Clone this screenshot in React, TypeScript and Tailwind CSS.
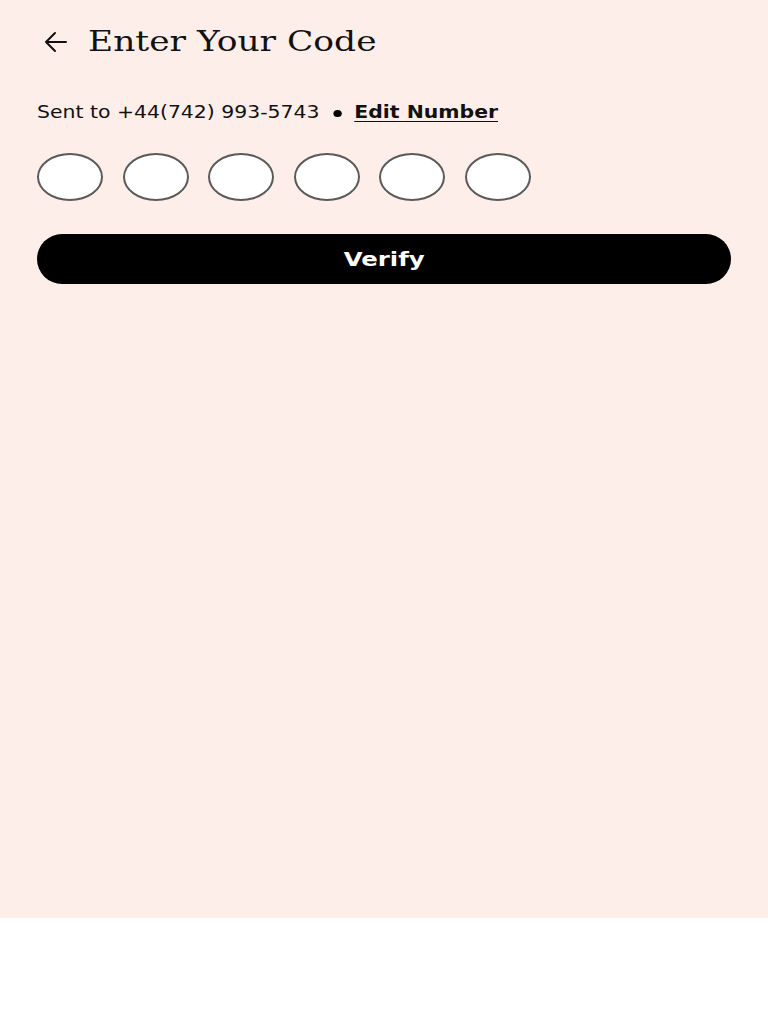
import React from "react";

export default function App() {
  return (
    <div className="w-[768px] h-[1024px] bg-white overflow-hidden">
      <div className="h-[918px] bg-[#feeee9] px-[37px] pt-[23px]" style={{ fontFamily: '"DejaVu Sans", sans-serif' }}>
        <div className="flex items-center h-[38px]">
          <svg width="26" height="22" viewBox="0 0 26 22" className="ml-[6px]" fill="none" stroke="#111" strokeWidth="2" strokeLinecap="round" strokeLinejoin="round">
            <path d="M23 11H3M12 2L3 11l9 9" />
          </svg>
          <h1 className="ml-[19px] text-[28px] text-[#111] leading-none inline-block origin-left scale-x-[1.23] whitespace-nowrap" style={{ fontFamily: '"DejaVu Serif", serif' }}>Enter Your Code</h1>
        </div>
        <div className="mt-[38px] w-fit flex items-center text-[17px] text-[#111] leading-none h-[26px] origin-left scale-x-[1.2] whitespace-nowrap">
          <span>Sent to +44(742) 993-5743</span>
          <span className="ml-[12px] mr-[10px] w-[7px] h-[7px] rounded-full bg-black inline-block mt-[3px]" />
          <span className="font-bold underline underline-offset-[3px]">Edit Number</span>
        </div>
        <div className="mt-[28px] flex gap-[19.5px]">
          {[0, 1, 2, 3, 4, 5].map((i) => (
            <input key={i} className="w-[66px] h-[48px] rounded-[50%] bg-white border-2 border-[#5a5a5a] outline-none" />
          ))}
        </div>
        <button className="mt-[33px] w-full h-[50px] rounded-full bg-black text-white font-bold text-[20px]">
          <span className="inline-block scale-x-[1.22]">Verify</span>
        </button>
      </div>
    </div>
  );
}
